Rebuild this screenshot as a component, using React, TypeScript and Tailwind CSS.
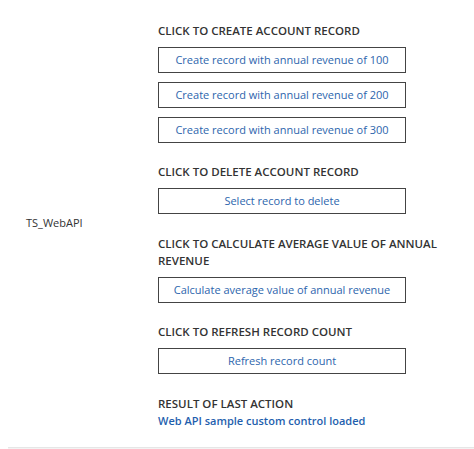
import React from "react";

const font = { fontFamily: '"Open Sans", "Noto Sans", sans-serif' };

function Heading({ children }: { children: React.ReactNode }) {
  return (
    <div className="mb-[8px] text-[11.5px] leading-[17px] font-semibold text-[#333]">{children}</div>
  );
}

function ActionButton({ label }: { label: string }) {
  return (
    <button className="block h-[26px] w-[248px] border border-[#444] bg-white text-center text-[11px] leading-[24px] text-[#2d65ad]">
      {label}
    </button>
  );
}

export default function App() {
  return (
    <div className="h-[449px] w-[474px] overflow-hidden bg-white" style={font}>
      <div className="flex items-center">
        <div className="mt-[18px] w-[158px] shrink-0 pl-[26px] text-[11px] text-[#333]">TS_WebAPI</div>

        <div className="w-[300px] pt-[22px]">
          <Heading>CLICK TO CREATE ACCOUNT RECORD</Heading>
          <div className="flex flex-col gap-[9px]">
            <ActionButton label="Create record with annual revenue of 100" />
            <ActionButton label="Create record with annual revenue of 200" />
            <ActionButton label="Create record with annual revenue of 300" />
          </div>

          <div className="mt-[20px]">
            <Heading>CLICK TO DELETE ACCOUNT RECORD</Heading>
            <ActionButton label="Select record to delete" />
          </div>

          <div className="mt-[21px]">
            <Heading>CLICK TO CALCULATE AVERAGE VALUE OF ANNUAL REVENUE</Heading>
            <ActionButton label="Calculate average value of annual revenue" />
          </div>

          <div className="mt-[20px]">
            <Heading>CLICK TO REFRESH RECORD COUNT</Heading>
            <ActionButton label="Refresh record count" />
          </div>

          <div className="mt-[21px] leading-[17px] font-semibold">
            <div className="text-[11.5px] text-[#333]">RESULT OF LAST ACTION</div>
            <div className="text-[11px] text-[#1f5fae]">Web API sample custom control loaded</div>
          </div>
        </div>
      </div>

      {/* footer strip */}
      <div className="mt-[18px] ml-[8px] h-[4px] border-t border-[#e6e6e6] bg-[#f3f3f3]" />
    </div>
  );
}
